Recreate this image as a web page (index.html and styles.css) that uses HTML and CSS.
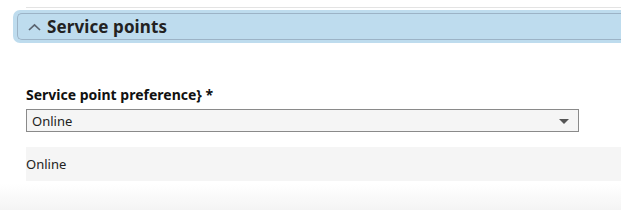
FILE: index.html
```html
<!DOCTYPE html>
<html>
<head>
<meta charset="utf-8">
<link rel="stylesheet" href="styles.css">
</head>
<body>
<div class="page">
  <div class="rule"></div>
  <div class="panel-head">
    <div class="panel-inner">
      <svg class="chev" width="13" height="8" viewBox="0 0 13 8"><path d="M1 7 L6.5 1.8 L12 7" fill="none" stroke="#5a6470" stroke-width="1.7"/></svg>
      <span class="panel-title">Service points</span>
    </div>
  </div>
  <div class="field">
    <label class="field-label">Service point preference} *</label>
    <div class="select">
      <span class="select-value">Online</span>
      <svg class="caret" width="10" height="6" viewBox="0 0 10 6"><path d="M0 0 H10 L5 5 Z" fill="#555"/></svg>
    </div>
  </div>
  <div class="output">Online</div>
  <div class="fade"></div>
</div>
</body>
</html>
```
FILE: styles.css
```css
html, body {
  margin: 0;
  padding: 0;
  background: #fff;
}
body {
  font-family: "Noto Sans", "DejaVu Sans", sans-serif;
  color: #222;
  width: 621px;
  height: 210px;
  overflow: hidden;
}
.page {
  display: flex;
  flex-direction: column;
}
.rule {
  margin: 7px 0 0 26px;
  height: 1px;
  background: #e3e3e3;
}
.panel-head {
  margin: 2px 0 0 13px;
  height: 33px;
  background: #bedcee;
  border-radius: 7px 0 0 7px;
  padding: 3px 0 3px 4px;
  box-sizing: border-box;
}
.panel-inner {
  height: 100%;
  box-sizing: border-box;
  border: 1px solid #9cb3c6;
  border-right: none;
  border-radius: 5px 0 0 5px;
  display: flex;
  align-items: center;
  padding-left: 10px;
  gap: 6px;
}
.chev {
  display: block;
}
.panel-title {
  font-weight: 700;
  font-size: 17px;
  color: #222;
  letter-spacing: 0.1px;
}
.field {
  margin: 43px 0 0 26px;
  display: flex;
  flex-direction: column;
}
.field-label {
  font-weight: 700;
  font-size: 14px;
  line-height: 17px;
  color: #111;
}
.select {
  margin-top: 6px;
  width: 553px;
  height: 23px;
  box-sizing: border-box;
  border: 1px solid #8a8a8a;
  background: #f5f5f5;
  display: flex;
  align-items: center;
  justify-content: space-between;
  padding: 0 9px 0 5px;
}
.select-value {
  font-size: 13px;
  color: #222;
}
.caret {
  display: block;
  margin-top: 2px;
}
.output {
  margin: 15px 0 0 26px;
  height: 34px;
  background: #f5f5f5;
  display: flex;
  align-items: center;
  font-size: 13px;
  color: #222;
}
.fade {
  height: 29px;
  background: linear-gradient(#fff 10%, #f4f4f4);
}
```
